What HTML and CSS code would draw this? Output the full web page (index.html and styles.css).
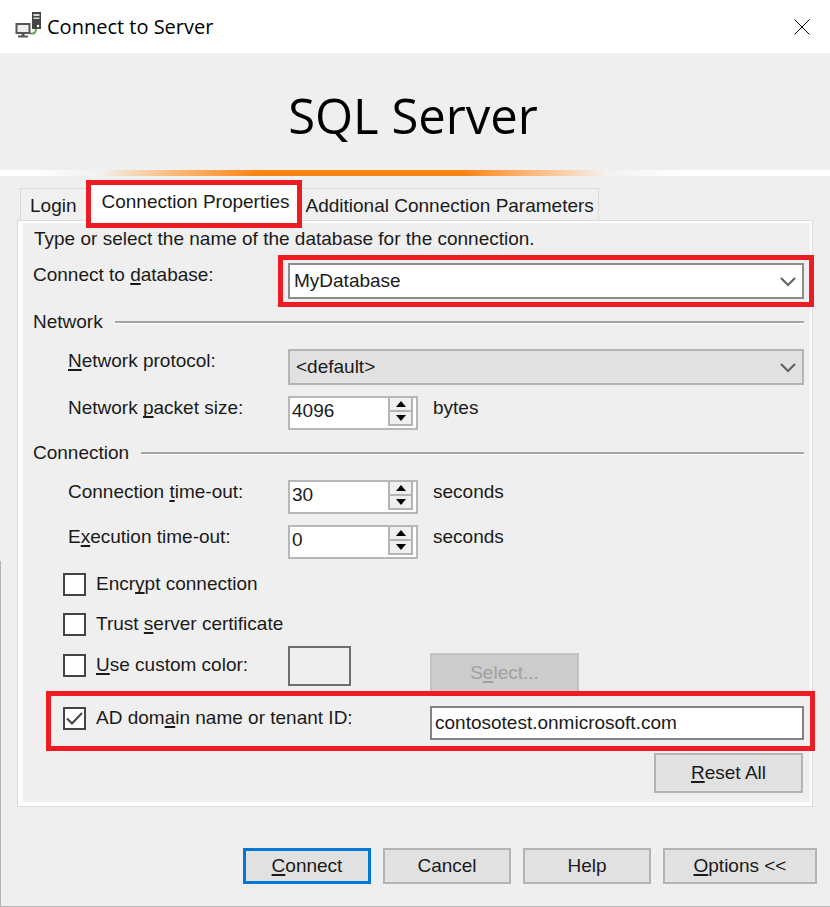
FILE: index.html
```html
<!DOCTYPE html>
<html lang="en">
<head>
<meta charset="utf-8">
<title>Connect to Server</title>
<link rel="stylesheet" href="styles.css">
</head>
<body>
<main class="dialog">
  <header class="titlebar">
    <svg class="app-icon" width="27" height="27" viewBox="0 0 27 27" aria-hidden="true">
      <path d="M15 21.500h2.500q3.500 0 3.500-5" fill="none" stroke="#5aa856" stroke-width="2"/>
      <path d="M17 0h9v17h-9z" fill="#444"/>
      <path d="M18.500 2h6v2h-6zM18.500 5.500h6v1.500h-6z" fill="#ddd"/>
      <circle cx="23" cy="14" r="1.200" fill="#fff"/>
      <path d="M1.500 12h13v9h-13z" fill="#efefef" stroke="#555" stroke-width="2"/>
      <path d="M6.500 21.500h3v2h3.500v2h-10v-2h3.500z" fill="#555"/>
    </svg>
    <h1 class="title">Connect to Server</h1>
    <button class="close" type="button" aria-label="Close">
      <svg width="16" height="16" viewBox="0 0 16 16" aria-hidden="true"><path d="M.5.5l15 15M15.500.5l-15 15" stroke="#000" stroke-width="1"/></svg>
    </button>
  </header>
  <div class="banner">SQL Server</div>
  <div class="stripe"></div>

  <form class="content">
    <div class="tabs" role="tablist">
      <button class="tab" type="button" role="tab">Login</button>
      <button class="tab active marked" type="button" role="tab" aria-selected="true">Connection Properties</button>
      <button class="tab last" type="button" role="tab">Additional Connection Parameters</button>
    </div>

    <section class="panel">
      <p class="hint">Type or select the name of the database for the connection.</p>
      <div class="row database">
        <label for="database">Connect to <u>d</u>atabase:</label>
        <div class="combo marked">
          <select id="database"><option>MyDatabase</option></select>
          <svg class="chevron" width="16" height="10" viewBox="0 0 16 10" aria-hidden="true"><path d="M1 1l7 7 7-7"/></svg>
        </div>
      </div>

      <h2 class="group">Network</h2>
      <div class="row protocol">
        <label class="indent" for="protocol"><u>N</u>etwork protocol:</label>
        <div class="combo flat">
          <select id="protocol"><option>&lt;default&gt;</option></select>
          <svg class="chevron" width="16" height="10" viewBox="0 0 16 10" aria-hidden="true"><path d="M1 1l7 7 7-7"/></svg>
        </div>
      </div>
      <div class="row">
        <label class="indent" for="packet">Network <u>p</u>acket size:</label>
        <div class="measure">
          <div class="spinner">
            <input id="packet" type="number" value="4096">
            <div class="steps">
              <button type="button" aria-label="Increase packet size"><svg width="10" height="6" viewBox="0 0 10 6"><path d="M0 6l5-6 5 6z"/></svg></button>
              <button type="button" aria-label="Decrease packet size"><svg width="10" height="6" viewBox="0 0 10 6"><path d="M0 0l5 6 5-6z"/></svg></button>
            </div>
          </div>
          <span>bytes</span>
        </div>
      </div>

      <h2 class="group">Connection</h2>
      <div class="row timeout">
        <label class="indent" for="timeout">Connection <u>t</u>ime-out:</label>
        <div class="measure">
          <div class="spinner">
            <input id="timeout" type="number" value="30">
            <div class="steps">
              <button type="button" aria-label="Increase connection time-out"><svg width="10" height="6" viewBox="0 0 10 6"><path d="M0 6l5-6 5 6z"/></svg></button>
              <button type="button" aria-label="Decrease connection time-out"><svg width="10" height="6" viewBox="0 0 10 6"><path d="M0 0l5 6 5-6z"/></svg></button>
            </div>
          </div>
          <span>seconds</span>
        </div>
      </div>
      <div class="row">
        <label class="indent" for="execution">E<u>x</u>ecution time-out:</label>
        <div class="measure">
          <div class="spinner">
            <input id="execution" type="number" value="0">
            <div class="steps">
              <button type="button" aria-label="Increase execution time-out"><svg width="10" height="6" viewBox="0 0 10 6"><path d="M0 6l5-6 5 6z"/></svg></button>
              <button type="button" aria-label="Decrease execution time-out"><svg width="10" height="6" viewBox="0 0 10 6"><path d="M0 0l5 6 5-6z"/></svg></button>
            </div>
          </div>
          <span>seconds</span>
        </div>
      </div>

      <div class="checks">
        <label class="check"><input type="checkbox"><span>Encr<u>y</u>pt connection</span></label>
        <label class="check"><input type="checkbox"><span>Trust <u>s</u>erver certificate</span></label>
      </div>
      <div class="row color">
        <label class="check"><input type="checkbox"><span><u>U</u>se custom color:</span></label>
        <div class="picker">
          <span class="swatch"></span>
          <button class="button" type="button" disabled>S<u>e</u>lect...</button>
        </div>
      </div>
      <div class="row tenant marked">
        <label class="check"><input type="checkbox" checked><span>AD dom<u>a</u>in name or tenant ID:</span></label>
        <input class="text" type="text" value="contosotest.onmicrosoft.com" aria-label="AD domain name or tenant ID">
      </div>
      <button class="button reset" type="button"><u>R</u>eset All</button>
    </section>

    <footer class="actions">
      <button class="button primary" type="button"><u>C</u>onnect</button>
      <button class="button" type="button">Cancel</button>
      <button class="button" type="button">Help</button>
      <button class="button wide" type="button"><u>O</u>ptions &lt;&lt;</button>
    </footer>
  </form>
</main>
</body>
</html>
```
FILE: styles.css
```css
* { box-sizing: border-box; }

body {
  margin: 0;
  background: #efefef;
  color: #1a1a1a;
  font-family: "Liberation Sans", Arial, sans-serif;
  font-size: 19px;
  line-height: 24px;
}

button, input, select { font: inherit; color: inherit; border-radius: 0; margin: 0; }

u { text-decoration-thickness: 2px; text-underline-offset: 2px; text-decoration-skip-ink: none; }

.dialog {
  min-height: 100vh;
  border-bottom: 1px solid #b4b4b4;
  background: linear-gradient(#b4b4b4, #b4b4b4) left bottom / 1px 345px no-repeat #efefef;
}

.titlebar {
  display: flex;
  align-items: center;
  height: 53px;
  padding: 0 20px 0 15px;
  background: #fff;
}

.app-icon { margin-bottom: 2px; }

.title {
  flex: 1;
  margin: 0 0 0 5px;
  font: 400 20px/28px "Open Sans", sans-serif;
  color: #000;
}

.close { display: flex; padding: 0; border: 0; background: none; }

.banner {
  height: 117px;
  padding: 30px 4px 0 0;
  text-align: center;
  font: 400 49px/64px "Open Sans", sans-serif;
  color: #000;
}

.stripe {
  height: 6px;
  background: linear-gradient(90deg, #fff 5%, #f7f7f7 8%, #f3f1ef 12%, #fcb878 21%, #ff8516 31%, #ff8516 56%, #fcb878 64%, #f3f1ef 73%, #f7f7f9 77%, #fff 82%);
}

.content { padding: 8px 17px 22px; }

.tabs { display: flex; align-items: flex-end; height: 36px; padding-left: 3px; }

.tab {
  height: 32px;
  padding: 2px 12px 0 9px;
  border: 1px solid #dadada;
  border-bottom: 0;
  background: #f0f0f0;
  white-space: nowrap;
}

.tab.last { padding: 2px 4px 0 7px; }

.tab.active {
  align-self: flex-start;
  height: 39px;
  padding: 0 7px 4px 11px;
  border-color: #fff;
  background: #fff;
}

.marked { position: relative; }

.marked::after {
  content: "";
  position: absolute;
  inset: -9px;
  border: 5px solid #ed1c24;
  pointer-events: none;
}

.tab.marked::after { inset: -5px; }

.panel {
  padding: 4px 6px 13px 10px;
  border: 1px solid #dadada;
  box-shadow: inset 5px 0 #fff, inset -2px 0 #fff, inset 0 2px #fff, inset 0 -4px #fff;
}

.hint { margin: 2px 0 12px 6px; }

.row {
  display: grid;
  grid-template-columns: 255px 1fr;
  align-items: start;
  margin: 11px 2px 0 5px;
}

.row.protocol, .row.timeout { margin-top: 15px; }

.indent { padding-left: 35px; }

.combo { display: flex; }

.combo select {
  appearance: none;
  width: 100%;
  height: 36px;
  padding: 0 32px 0 4px;
  border: 2px solid #8c8c8c;
  background: #fff;
}

.combo.flat select { padding-left: 6px; border-color: #b4b4b4; background: #e1e1e1; }

.combo.marked::after { inset: -8px -10px; }

.chevron {
  position: absolute;
  right: 8px;
  top: 14px;
  fill: none;
  stroke: #606060;
  stroke-width: 2;
}

.combo.flat { position: relative; }

.group {
  display: flex;
  align-items: center;
  gap: 12px;
  margin: 11px 2px 0 5px;
  font-size: 19px;
  font-weight: 400;
}

.group::after { content: ""; flex: 1; height: 2px; background: #a5a5a5; box-shadow: 0 1px #fff; }

.measure { display: flex; gap: 15px; }

.spinner {
  display: flex;
  width: 130px;
  height: 34px;
  border: 2px solid #b6b6bb;
  background: #fff;
  padding: 0 3px 2px 2px;
}

.spinner input {
  appearance: textfield;
  flex: 1;
  min-width: 0;
  padding: 0 0 2px;
  border: 0;
  background: none;
}

.spinner input::-webkit-inner-spin-button { appearance: none; margin: 0; }

.steps { display: grid; grid-template-rows: 1fr 1fr; width: 25px; }

.steps button {
  display: grid;
  place-items: center;
  min-height: 0;
  padding: 0;
  border: 2px solid #b4b4b4;
  border-top-width: 0;
  background: #efefef;
}

.checks { display: grid; gap: 16px; margin: 13px 0 0 35px; }

.check { display: flex; align-items: center; gap: 10px; white-space: nowrap; }

.row .check { padding-left: 30px; }

.check input {
  appearance: none;
  width: 23px;
  height: 23px;
  border: 2px solid #444;
  background: #fff;
}

.check input:checked {
  background: #fff url("data:image/svg+xml,%3Csvg xmlns='http://www.w3.org/2000/svg' viewBox='0 0 19 19'%3E%3Cpath d='M2 9.500l5 5L17 4' fill='none' stroke='%23444' stroke-width='2'/%3E%3C/svg%3E") center / 19px no-repeat;
}

.row.color { margin-top: 10px; }

.color .check { margin-top: 7px; }

.picker { display: flex; gap: 79px; }

.swatch { width: 63px; height: 40px; border: 2px solid #6e6e6e; }

.picker .button { margin-top: 7px; }

.row.tenant { grid-template-columns: 397px 1fr; margin-top: 13px; }

.tenant.marked::after { inset: -15px -11px -11px 13px; }

.text {
  width: 100%;
  height: 34px;
  padding: 0 3px;
  border: 2px solid #828282;
  background: #fff;
}

.button {
  width: 128px;
  height: 36px;
  padding: 0;
  border: 2px solid #b4b4b4;
  background: #e1e1e1;
}

.button:disabled { width: 149px; height: 40px; border-color: #c4c4c4; background: #ccc; color: #a0a0a0; }

.button.reset { display: block; width: 149px; height: 40px; margin: 13px 3px 0 auto; }

.actions { display: flex; justify-content: flex-end; gap: 12px; margin: 41px -4px 0 0; }

.button.primary { border: 3px solid #0078d7; }

.button.wide { width: 154px; }
```
